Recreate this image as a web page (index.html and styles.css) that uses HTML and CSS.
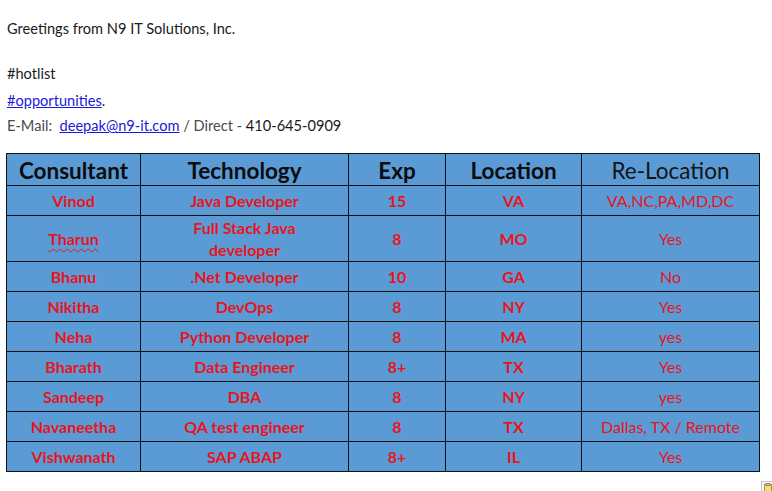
FILE: index.html
```html
<!DOCTYPE html>
<html>
<head>
<meta charset="utf-8">
<link rel="stylesheet" href="styles.css">
</head>
<body>
<div class="page">
  <p class="line greet">Greetings from N9 IT Solutions, Inc.</p>
  <p class="line blank">&nbsp;</p>
  <p class="line tag">#hotlist</p>
  <p class="line wide"><a class="link" href="#">#opportunities</a>.</p>
  <p class="line wide"><span class="grey">E-Mail:&nbsp; </span><a class="link" href="#">deepak@n9-it.com</a><span class="grey"> / Direct - </span>410-645-0909</p>

  <table class="hot">
    <colgroup>
      <col class="c1"><col class="c2"><col class="c3"><col class="c4"><col class="c5">
    </colgroup>
    <thead>
      <tr class="head">
        <th>Consultant</th><th>Technology</th><th>Exp</th><th>Location</th><th class="reg">Re-Location</th>
      </tr>
    </thead>
    <tbody>
      <tr><td>Vinod</td><td>Java Developer</td><td>15</td><td>VA</td><td class="reg">VA,NC,PA,MD,DC</td></tr>
      <tr class="tall"><td><span class="squiggle">Tharun</span></td><td>Full Stack Java<br>developer</td><td>8</td><td>MO</td><td class="reg">Yes</td></tr>
      <tr><td>Bhanu</td><td>.Net Developer</td><td>10</td><td>GA</td><td class="reg">No</td></tr>
      <tr><td>Nikitha</td><td>DevOps</td><td>8</td><td>NY</td><td class="reg">Yes</td></tr>
      <tr><td>Neha</td><td>Python Developer</td><td>8</td><td>MA</td><td class="reg">yes</td></tr>
      <tr><td>Bharath</td><td>Data Engineer</td><td>8+</td><td>TX</td><td class="reg">Yes</td></tr>
      <tr><td>Sandeep</td><td>DBA</td><td>8</td><td>NY</td><td class="reg">yes</td></tr>
      <tr><td>Navaneetha</td><td>QA test engineer</td><td>8</td><td>TX</td><td class="reg">Dallas, TX / Remote</td></tr>
      <tr><td>Vishwanath</td><td>SAP ABAP</td><td>8+</td><td>IL</td><td class="reg">Yes</td></tr>
    </tbody>
  </table>
</div>
<div class="paste" aria-hidden="true">
  <svg width="11" height="10" viewBox="0 0 11 10">
    <rect x="2.5" y="2.5" width="7" height="9" fill="#f2df6e" stroke="#a8973e"/>
    <rect x="4" y="1.5" width="4" height="2" fill="#c8c8c8" stroke="#7a7a7a" stroke-width="0.8"/>
  </svg>
</div>
</body>
</html>
```
FILE: styles.css
```css
html, body {
  margin: 0;
  padding: 0;
  background: #ffffff;
}
body {
  font-family: "Lato", "Open Sans", "Liberation Sans", sans-serif;
  color: #1a1a1a;
  overflow: hidden;
}
.page {
  padding: 18px 0 0 7px;
}
.line {
  margin: 0;
  font-size: 14.6px;
  line-height: 22px;
  height: 22px;
}
.line.blank {
  height: 23px;
}
.line.tag {
  margin-bottom: 3px;
}
.line.wide {
  height: 25px;
  line-height: 25px;
}
.link {
  color: #1a1ad6;
  text-decoration: underline;
}
.grey {
  color: #4a4a4a;
}
.hot {
  margin-top: 15px;
  margin-left: -1px;
  border-collapse: collapse;
  table-layout: fixed;
  width: 753px;
  background: #5b9bd5;
}
.c1 { width: 134px; }
.c2 { width: 208px; }
.c3 { width: 97px; }
.c4 { width: 136px; }
.c5 { width: 178px; }
.hot th, .hot td {
  border: 1px solid #101010;
  padding: 0;
  text-align: center;
  vertical-align: middle;
}
.hot th {
  font-size: 22.5px;
  font-weight: 700;
  color: #0c0c0c;
  height: 29px;
  padding-top: 2px;
  line-height: 26px;
}
.hot th.reg {
  font-weight: 400;
  color: #141414;
}
.hot td {
  font-size: 16px;
  font-weight: 700;
  color: #e8141c;
  height: 29px;
  line-height: 22px;
}
.hot td.reg {
  font-weight: 400;
}
.hot tr.tall td {
  height: 45px;
}
.squiggle {
  text-decoration: underline wavy #e8141c;
  text-decoration-thickness: 1px;
  text-underline-offset: 3px;
}
.paste {
  position: absolute;
  left: 761px;
  top: 481px;
  width: 12px;
  height: 12px;
  border: 1px solid #c4c4c4;
  border-right: 0;
  border-bottom: 0;
  background: #fafafa;
}
.paste svg {
  display: block;
}
```
